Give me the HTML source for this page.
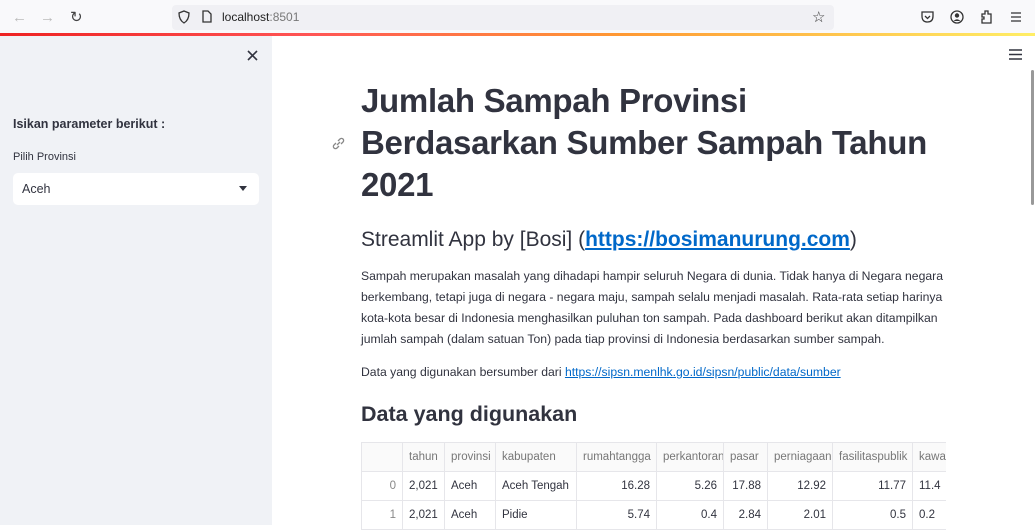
<!DOCTYPE html>
<html><head><meta charset="utf-8"><style>
*{box-sizing:border-box;margin:0;padding:0}
body{width:1035px;height:525px;overflow:hidden;font-family:"Liberation Sans",sans-serif;background:#fff;position:relative;color:#31333f}
.tb{position:absolute;left:0;top:0;width:1035px;height:33px;background:#f9f9fb}
.grad{position:absolute;left:0;top:33px;width:1035px;height:3px;background:linear-gradient(90deg,#e22 0%,#f55 30%,#f93 60%,#fe6 100%)}
.url{position:absolute;left:172px;top:5px;width:662px;height:25px;background:#f0f0f4;border-radius:4px}
.side{position:absolute;left:0;top:36px;width:272px;height:489px;background:#f0f2f6}
.abs{position:absolute;white-space:nowrap}
h1{position:absolute;left:361px;top:80px;font-size:33px;line-height:42px;font-weight:bold;color:#31333f;letter-spacing:-0.3px;white-space:nowrap}
.p{font-size:12.2px;line-height:21px;color:#31333f}
a{color:#0068c9}
table{position:absolute;left:0;top:0;border-collapse:collapse;font-size:11.5px;color:#31333f;table-layout:fixed;width:631px}
td{border:1px solid #e6e6ea;height:29px;padding:0 6px;white-space:nowrap;overflow:hidden}
tr.h td{color:#777;background:#fafafa}
.r{text-align:right}
</style></head><body>
<div class="tb"></div>
<div class="abs" style="left:12px;top:9px;color:#bbb;font-size:15px">&#8592;</div>
<div class="abs" style="left:40px;top:9px;color:#bbb;font-size:15px">&#8594;</div>
<div class="abs" style="left:70px;top:8px;color:#444;font-size:15px">&#8635;</div>
<div class="url"></div>
<svg class="abs" style="left:178px;top:10px" width="12" height="14"><path d="M6 1 L11 3 Q11 10 6 13 Q1 10 1 3Z" fill="none" stroke="#333" stroke-width="1.3"/></svg>
<svg class="abs" style="left:202px;top:10px" width="10" height="13"><path d="M1 1H6L9 4V12H1Z" fill="none" stroke="#333" stroke-width="1.3"/></svg>
<div class="abs" style="left:222px;top:10px;font-size:12px;color:#222">localhost<span style="color:#777">:8501</span></div>
<div class="abs" style="left:812px;top:8px;font-size:15px;color:#333">&#9734;</div>
<svg class="abs" style="left:921px;top:11px" width="13" height="12"><path d="M1 1H12V5Q12 11 6.5 11Q1 11 1 5Z M4 5L6.5 7.5 9 5" fill="none" stroke="#333" stroke-width="1.3"/></svg>
<svg class="abs" style="left:950px;top:10px" width="14" height="14"><circle cx="7" cy="7" r="6" fill="none" stroke="#333" stroke-width="1.3"/><circle cx="7" cy="5.5" r="2.2" fill="#333"/><path d="M3.5 11Q7 7.5 10.5 11" fill="#333"/></svg>
<svg class="abs" style="left:980px;top:9px" width="14" height="16"><path d="M2 5H5V2H8V5H11V14H2V10H4V8H2Z" fill="none" stroke="#333" stroke-width="1.3"/></svg>
<svg class="abs" style="left:1010px;top:12px" width="12" height="10"><path d="M1 1H11M1 5H11M1 9H11" stroke="#333" stroke-width="1.3"/></svg>
<div class="grad"></div>
<div class="side"></div>
<svg class="abs" style="left:247px;top:50px" width="11" height="11"><path d="M1 1L10 10M10 1L1 10" stroke="#31333f" stroke-width="1.6"/></svg>
<div class="abs" style="left:13px;top:117px;font-size:12.5px;font-weight:bold">Isikan parameter berikut :</div>
<div class="abs" style="left:13px;top:151px;font-size:11px">Pilih Provinsi</div>
<div class="abs" style="left:13px;top:173px;width:246px;height:32px;background:#fff;border-radius:5px"></div>
<div class="abs" style="left:22px;top:182px;font-size:12.5px">Aceh</div>
<div class="abs" style="left:239px;top:186px;width:0;height:0;border-left:4px solid transparent;border-right:4px solid transparent;border-top:5px solid #31333f"></div>
<svg class="abs" style="left:1009px;top:49px" width="13" height="11"><path d="M0 1H13M0 5.5H13M0 10H13" stroke="#31333f" stroke-width="1.6"/></svg>
<div class="abs" style="left:1031px;top:70px;width:3px;height:135px;background:#999;border-radius:2px"></div>
<svg class="abs" style="left:331px;top:136px" width="15" height="15"><g fill="none" stroke="#888" stroke-width="1.3"><path d="M6 9L9 6"/><path d="M5 7L3 9A2.1 2.1 0 0 0 6 12L8 10"/><path d="M7 5L9 3A2.1 2.1 0 0 1 12 6L10 8"/></g></svg>
<h1>Jumlah Sampah Provinsi<br>Berdasarkan Sumber Sampah Tahun<br>2021</h1>
<div class="abs" style="left:361px;top:228px;font-size:21px;color:#31333f">Streamlit App by [Bosi] (<a href="#" style="font-weight:bold">https://bosimanurung.com</a>)</div>
<div class="abs p" style="left:361px;top:266px">Sampah merupakan masalah yang dihadapi hampir seluruh Negara di dunia. Tidak hanya di Negara negara<br>berkembang, tetapi juga di negara - negara maju, sampah selalu menjadi masalah. Rata-rata setiap harinya<br>kota-kota besar di Indonesia menghasilkan puluhan ton sampah. Pada dashboard berikut akan ditampilkan<br>jumlah sampah (dalam satuan Ton) pada tiap provinsi di Indonesia berdasarkan sumber sampah.</div>
<div class="abs p" style="left:361px;top:362px">Data yang digunakan bersumber dari <a href="#">https://sipsn.menlhk.go.id/sipsn/public/data/sumber</a></div>
<div class="abs" style="left:361px;top:402px;font-size:21.5px;font-weight:bold;color:#31333f">Data yang digunakan</div>
<div class="abs" style="left:361px;top:442px;width:585px;height:90px;overflow:hidden">
<table>
<colgroup><col style="width:41px"><col style="width:42px"><col style="width:51px"><col style="width:81px"><col style="width:80px"><col style="width:67px"><col style="width:44px"><col style="width:65px"><col style="width:80px"><col style="width:80px"></colgroup>
<tr class="h"><td></td><td>tahun</td><td>provinsi</td><td>kabupaten</td><td>rumahtangga</td><td>perkantoran</td><td>pasar</td><td>perniagaan</td><td>fasilitaspublik</td><td>kawasan</td></tr>
<tr><td class="r" style="color:#888">0</td><td>2,021</td><td>Aceh</td><td>Aceh Tengah</td><td class="r">16.28</td><td class="r">5.26</td><td class="r">17.88</td><td class="r">12.92</td><td class="r">11.77</td><td>11.4</td></tr>
<tr><td class="r" style="color:#888">1</td><td>2,021</td><td>Aceh</td><td>Pidie</td><td class="r">5.74</td><td class="r">0.4</td><td class="r">2.84</td><td class="r">2.01</td><td class="r">0.5</td><td>0.2</td></tr>
</table></div>
</body></html>
